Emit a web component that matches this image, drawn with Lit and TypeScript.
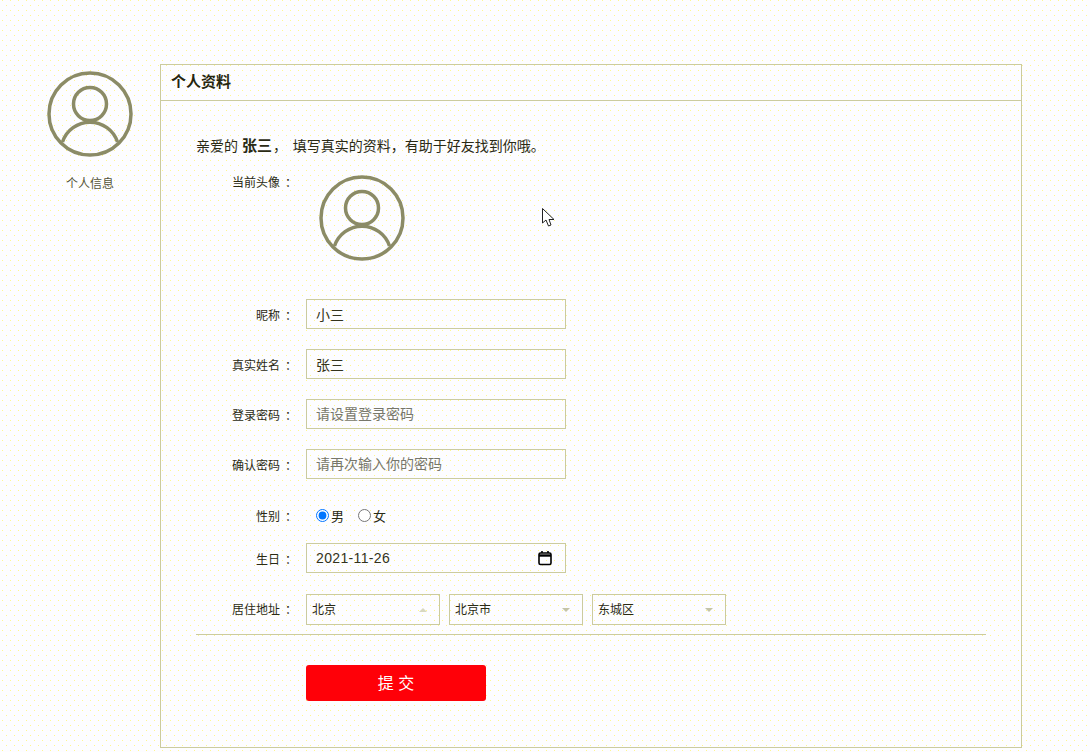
import { LitElement, html, css, svg } from "lit";
import { customElement } from "lit/decorators.js";

const avatar = svg`<svg class="avatar-svg" viewBox="0 0 86 86" width="86" height="86" fill="none" stroke="#8b8b66" stroke-width="3.5">
  <circle cx="43" cy="43" r="41"/>
  <circle cx="43" cy="33" r="16.500"/>
  <path d="M15.500 71 A29 29 0 0 1 70.500 71"/>
</svg>`;

const calendar = svg`<svg class="cal" width="16" height="16" viewBox="0 0 16 16" fill="none" stroke="#000">
  <rect x="2" y="3" width="12" height="11.500" rx="1.500" stroke-width="1.600"/>
  <path d="M2 5.500 H14" stroke-width="2.400"/>
  <path d="M5 1 V3 M11 1 V3" stroke-width="1.600"/>
</svg>`;

const label = (text: string) => html`<div class="label">${text}<span class="colon">：</span></div>`;

@customElement("app-root")
class AppRoot extends LitElement {
  static styles = css`
    :host {
      display: block;
      width: 1090px;
      height: 752px;
      overflow: hidden;
      font-family: "Liberation Sans", "Noto Sans CJK SC", sans-serif;
      color: #33331c;
      background-color: #fdfdff;
      background-image:
        radial-gradient(circle at 0.5px 0.5px, #fff68e 0.7px, transparent 0.7px),
        radial-gradient(circle at 0.5px 0.5px, #fff68e 0.7px, transparent 0.7px);
      background-size: 8px 10px;
      background-position: 2px 0, 6px 5px;
    }
    .page {
      display: flex;
      align-items: flex-start;
      padding-top: 64px;
      box-sizing: border-box;
    }
    .side {
      width: 160px;
      flex: none;
      display: flex;
      flex-direction: column;
      align-items: center;
      padding: 7px 0 0 20px;
      box-sizing: border-box;
    }
    .avatar-svg { display: block; }
    .side-label {
      margin-top: 18px;
      font-size: 12px;
      line-height: 18px;
      color: #55553c;
    }
    .panel {
      width: 862px;
      height: 684px;
      flex: none;
      box-sizing: border-box;
      border: 1px solid #cbcb9e;
    }
    .head {
      height: 36px;
      box-sizing: border-box;
      border-bottom: 1px solid #cbcb9e;
      padding-left: 10px;
      font-size: 15px;
      font-weight: 700;
      line-height: 33px;
      color: #26260f;
    }
    .body { padding: 35px 35px 0; }
    .greet {
      font-size: 14px;
      line-height: 20px;
      height: 20px;
      color: #2a2a14;
    }
    .greet b { font-weight: 700; font-size: 15px; margin-right: 1px; }
    .greet i { font-style: normal; margin-right: 2px; }
    .row {
      display: flex;
      align-items: center;
      height: 30px;
      margin-bottom: 20px;
    }
    .label {
      width: 95px;
      flex: none;
      text-align: right;
      font-size: 12px;
      color: #2a2a14;
    }
    .colon { margin-left: 5px; margin-right: -6px; }
    .row-avatar {
      display: flex;
      align-items: flex-start;
      height: 124px;
      margin-top: 19px;
    }
    .row-avatar .label { line-height: 14px; padding-top: 1px; }
    .row-avatar .avatar-svg { margin-left: 28px; }
    .field {
      margin-left: 15px;
      width: 260px;
      height: 30px;
      box-sizing: border-box;
      border: 1px solid #cbcb9e;
      background: transparent;
      padding: 0 9px;
      font: inherit;
      font-size: 14px;
      color: #33331c;
      outline: none;
      border-radius: 0;
    }
    .field::placeholder { color: #77776a; opacity: 1; }
    .date {
      display: flex;
      align-items: center;
      justify-content: space-between;
      letter-spacing: 0.35px;
      padding-right: 12px;
    }
    .cal { display: block; }
    .radios {
      margin-left: 25px;
      display: flex;
      align-items: center;
      font-size: 13px;
      color: #2a2a14;
    }
    .radios input { margin: 0 2px 0 0; width: 13px; height: 13px; }
    .radios label { display: flex; align-items: center; margin-right: 14px; }
    .row-sex { height: 32px; margin-bottom: 12px; }
    .row-date { margin-bottom: 21px; }
    .row-addr { height: 31px; margin-bottom: 0; }
    .row-addr .label { padding-bottom: 2px; }
    .selects {
      margin-left: 15px;
      display: flex;
      gap: 9px;
    }
    .sel {
      width: 134px;
      height: 31px;
      box-sizing: border-box;
      border: 1px solid #cbcb9e;
      padding: 0 12px 0 5px;
      display: flex;
      align-items: center;
      justify-content: space-between;
      font-size: 12px;
      color: #2a2a14;
    }
    .sel span { margin-bottom: 2px; }
    .arrow {
      width: 0;
      height: 0;
      border-left: 4px solid transparent;
      border-right: 4px solid transparent;
      border-top: 4px solid #c4c4a8;
    }
    .arrow.up {
      border-top: 0;
      border-bottom: 4px solid #d8d8c0;
    }
    .rule {
      height: 1px;
      background: #cbcb9e;
      margin-top: 9px;
    }
    .submit {
      display: block;
      margin: 30px 0 0 110px;
      width: 180px;
      height: 36px;
      border: 0;
      border-radius: 3px;
      background: #ff0008;
      color: #fff;
      font: inherit;
      font-size: 16px;
      padding: 0 0 2px;
    }
    .cursor {
      position: absolute;
      left: 542px;
      top: 208px;
      display: block;
    }
  `;

  render() {
    return html`
      <div class="page">
        <div class="side">
          ${avatar}
          <div class="side-label">个人信息</div>
        </div>
        <div class="panel">
          <div class="head">个人资料</div>
          <div class="body">
            <div class="greet">亲爱的 <b>张三</b><i>，</i> 填写真实的资料，有助于好友找到你哦。</div>
            <div class="row-avatar">
              ${label("当前头像")}
              ${avatar}
            </div>
            <div class="row">
              ${label("昵称")}
              <input class="field" value="小三" />
            </div>
            <div class="row">
              ${label("真实姓名")}
              <input class="field" value="张三" />
            </div>
            <div class="row">
              ${label("登录密码")}
              <input class="field" placeholder="请设置登录密码" />
            </div>
            <div class="row">
              ${label("确认密码")}
              <input class="field" placeholder="请再次输入你的密码" />
            </div>
            <div class="row row-sex">
              ${label("性别")}
              <div class="radios">
                <label><input type="radio" name="sex" checked />男</label>
                <label><input type="radio" name="sex" />女</label>
              </div>
            </div>
            <div class="row row-date">
              ${label("生日")}
              <div class="field date"><span>2021-11-26</span>${calendar}</div>
            </div>
            <div class="row row-addr">
              ${label("居住地址")}
              <div class="selects">
                <div class="sel"><span>北京</span><i class="arrow up"></i></div>
                <div class="sel"><span>北京市</span><i class="arrow"></i></div>
                <div class="sel"><span>东城区</span><i class="arrow"></i></div>
              </div>
            </div>
            <div class="rule"></div>
            <button class="submit">提 交</button>
          </div>
        </div>
      </div>
      <svg class="cursor" width="14" height="20" viewBox="0 0 14 20" fill="#fff" stroke="#222" stroke-width="1">
        <path d="M0.500 0.500 L0.500 15 L4 12 L6.500 18 L9 17 L7 11.500 L12 11.500 Z"/>
      </svg>
    `;
  }
}
